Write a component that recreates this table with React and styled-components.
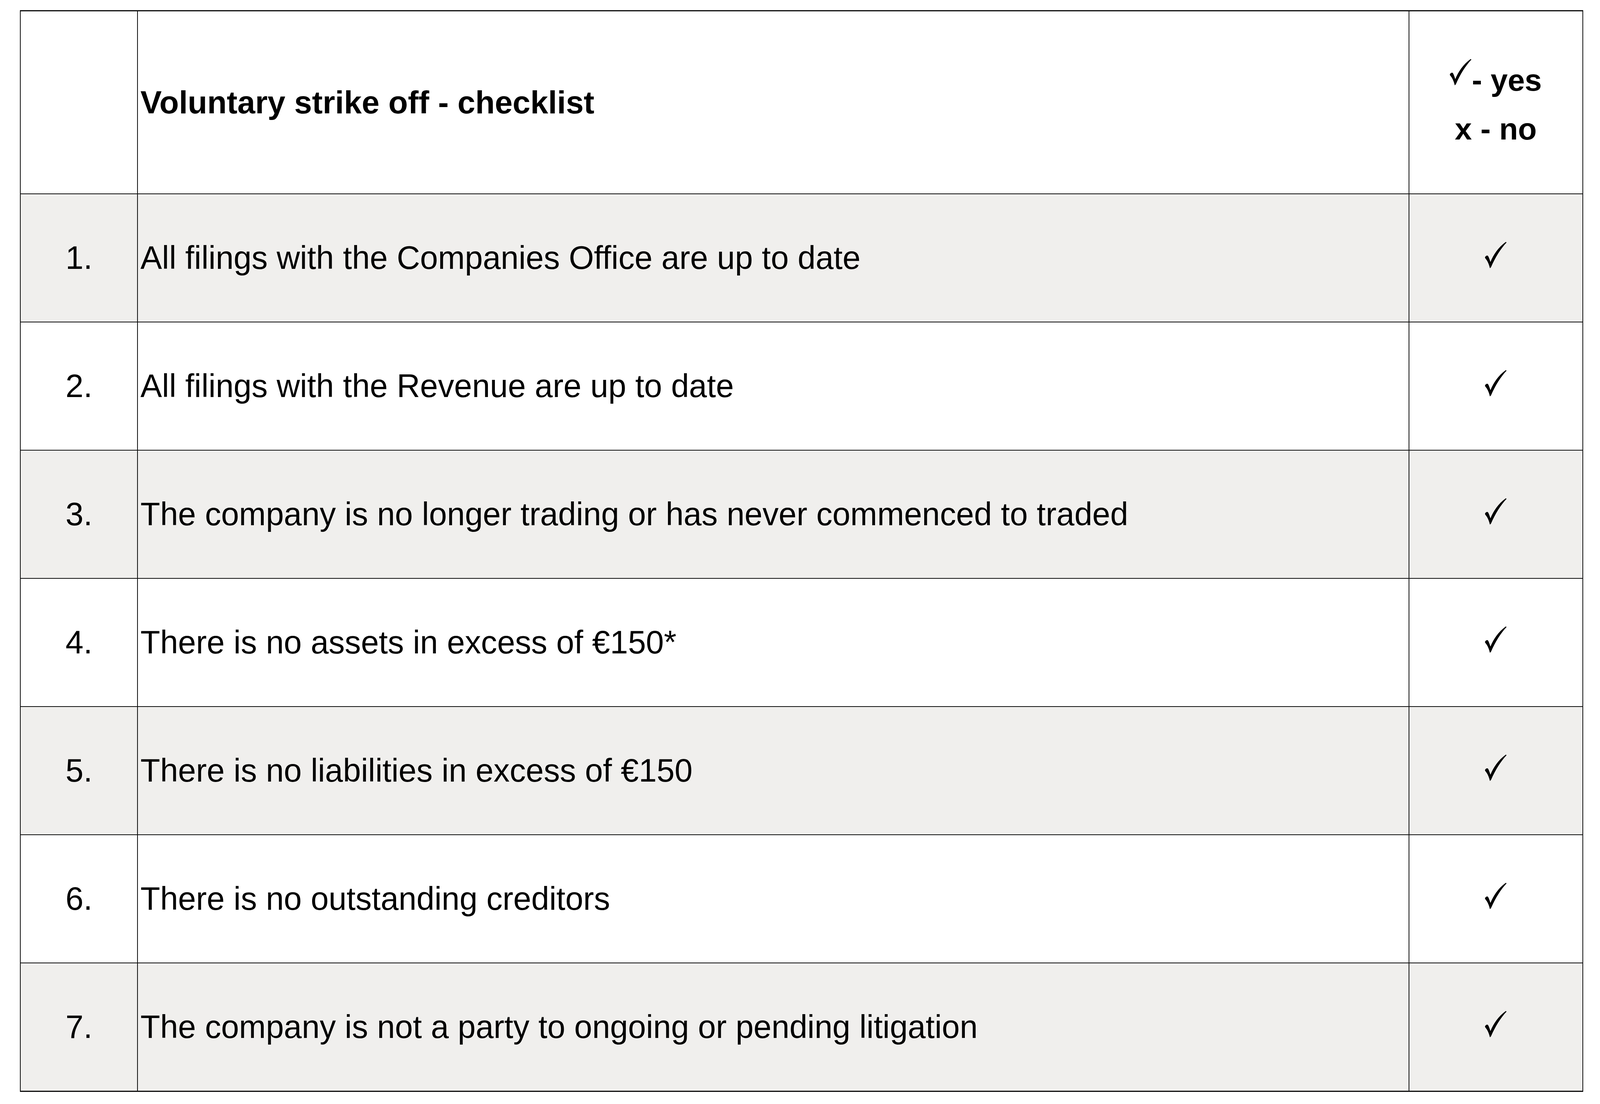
import React from "react";
import styled, { createGlobalStyle } from "styled-components";

/* Sizes are expressed relative to a 5208 x 2825 frame: horizontal measures
   in vw, vertical measures in vh, so the table keeps the reference's
   proportions whatever the real viewport size is. */
const u = (n) => `${((n * 100) / 5208).toFixed(4)}vw`;
const v = (n) => `${((n * 100) / 2825).toFixed(4)}vh`;

const LINE = "#0d0d0d";

const GlobalStyle = createGlobalStyle`
  html, body {
    margin: 0;
    padding: 0;
    background: #ffffff;
    overflow: hidden;
  }
  body {
    font-family: "Liberation Sans", Arial, sans-serif;
    color: #000;
  }
`;

const Page = styled.main`
  padding: ${v(26)} 0 0 ${u(65)};
`;

const Table = styled.section`
  box-sizing: border-box;
  width: ${u(5088)};
  border-style: solid;
  border-color: ${LINE};
  border-width: ${v(3.2)} ${u(3.2)};
  display: flex;
  flex-direction: column;
`;

const Row = styled.div`
  box-sizing: border-box;
  display: grid;
  grid-template-columns: ${u(379)} ${u(4138)} 1fr;
  height: ${(p) => (p.$header ? v(466) : v(328))};
  border-top: ${(p) => (p.$header ? "none" : `${v(2.8)} solid ${LINE}`)};
  background: ${(p) => (p.$shade ? "#f0efed" : "#ffffff")};
`;

const Cell = styled.div`
  box-sizing: border-box;
  display: flex;
  align-items: center;
  justify-content: ${(p) => (p.$align === "left" ? "flex-start" : "center")};
  border-left: ${(p) => (p.$first ? "none" : `${u(2.8)} solid ${LINE}`)};
  padding-left: ${(p) => (p.$align === "left" ? u(8) : "0")};
  font-size: ${u(105)};
  font-weight: 400;
  white-space: nowrap;
`;

const Title = styled.h1`
  margin: 0;
  font-size: ${u(104)};
  font-weight: 700;
`;

const Legend = styled.div`
  font-size: ${u(100)};
  font-weight: 700;
  line-height: ${v(125)};
  text-align: center;
  padding-top: ${v(12)};
`;

const CheckSvg = styled.svg`
  width: ${u(71)};
  height: ${v(68)};
  flex: none;
  display: ${(p) => (p.$inline ? "inline-block" : "block")};
  vertical-align: ${(p) => (p.$inline ? v(13) : "baseline")};
  margin: ${(p) => (p.$inline ? `0 ${u(1)} 0 0` : `0 0 ${v(14)} 0`)};
`;

const Check = ({ inline }) => (
  <CheckSvg
    $inline={inline}
    viewBox="0 0 71 68"
    preserveAspectRatio="none"
    aria-hidden="true"
  >
    <path
      fill="#000"
      d="M0.7 39.5 C2 36.5 5.5 34.6 9 35 C12 36 14.5 42 18.5 51.5 C28 33 44 14 68.5 0 L71 1.6 C52 17 34 40 20.5 64.5 L16.8 67.5 C14 58 9.5 49.5 3.5 43.8 C2 42.5 0.9 41.2 0.7 39.5 Z"
    />
  </CheckSvg>
);

const items = [
  "All filings with the Companies Office are up to date",
  "All filings with the Revenue are up to date",
  "The company is no longer trading or has never commenced to traded",
  "There is no assets in excess of €150*",
  "There is no liabilities in excess of €150",
  "There is no outstanding creditors",
  "The company is not a party to ongoing or pending litigation",
];

export default function App() {
  return (
    <>
      <GlobalStyle />
      <Page>
        <Table>
          <Row $header>
            <Cell $first />
            <Cell $align="left">
              <Title>Voluntary strike off - checklist</Title>
            </Cell>
            <Cell>
              <Legend>
                <div>
                  <Check inline />- yes
                </div>
                <div>x - no</div>
              </Legend>
            </Cell>
          </Row>
          {items.map((text, i) => (
            <Row key={i} $shade={i % 2 === 0}>
              <Cell $first>{i + 1}.</Cell>
              <Cell $align="left">{text}</Cell>
              <Cell>
                <Check />
              </Cell>
            </Row>
          ))}
        </Table>
      </Page>
    </>
  );
}
